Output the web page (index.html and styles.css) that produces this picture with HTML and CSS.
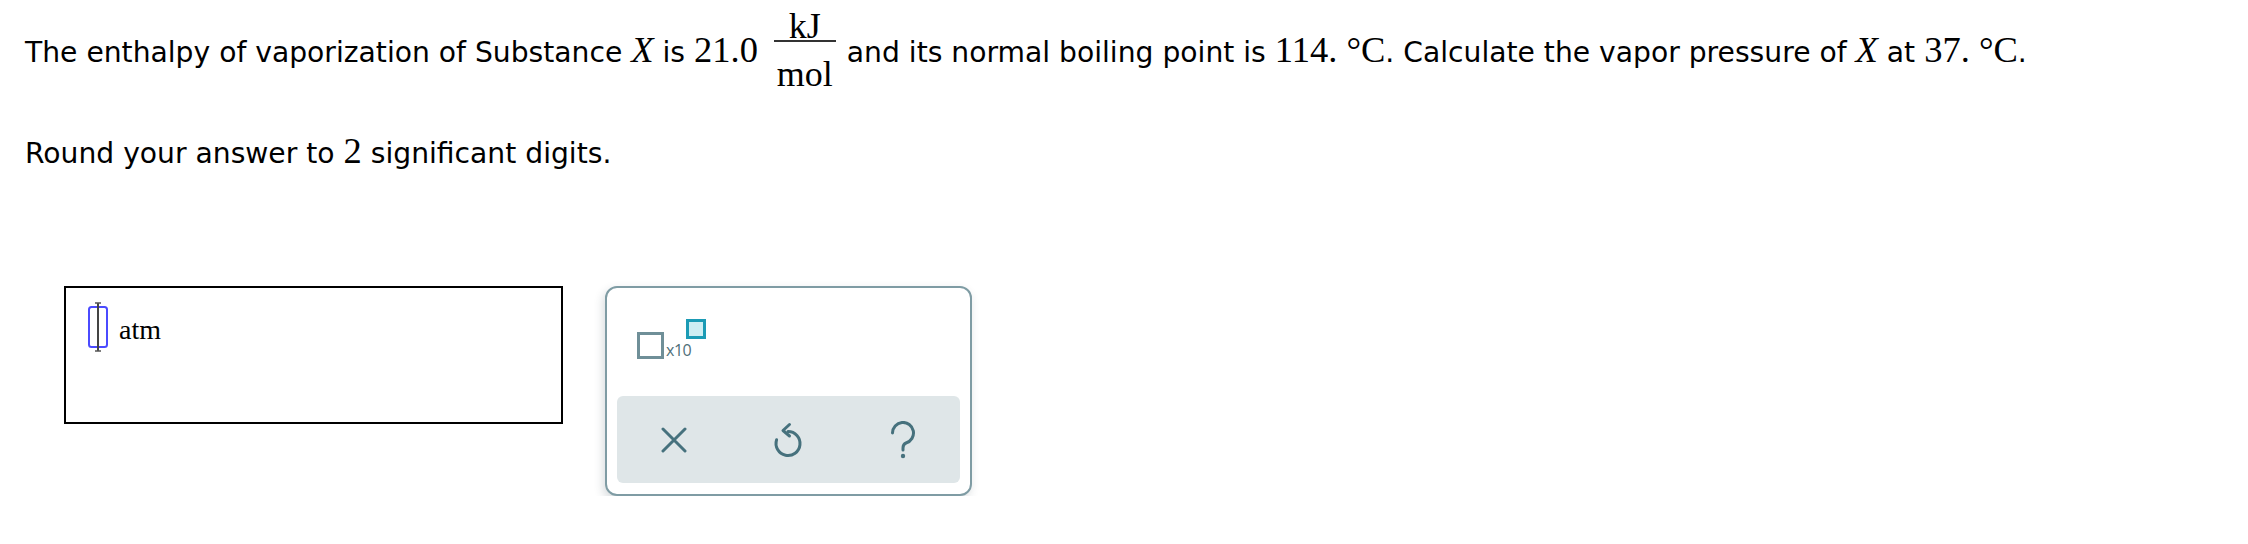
FILE: index.html
```html
<!DOCTYPE html>
<html>
<head>
<meta charset="utf-8">
<link rel="stylesheet" href="styles.css">
</head>
<body>
<div class="page">
  <p class="line1">The enthalpy of vaporization of Substance <i class="mvar">X</i> is <span class="m">21.0</span> <span class="frac"><span class="num">kJ</span><span class="bar"></span><span class="den">mol</span></span> and its normal boiling point is <span class="m">114. °C</span>. Calculate the vapor pressure of <i class="mvar">X</i> at <span class="m">37. °C</span>.</p>
  <p class="line2">Round your answer to <span class="m">2</span> significant digits.</p>
  <div class="answer-row">
    <div class="answer-box">
      <svg class="cursor" width="24" height="52" viewBox="0 0 24 52">
        <rect x="3" y="6" width="18" height="40" rx="2.5" fill="none" stroke="#4b4bff" stroke-width="2"/>
        <line x1="12" y1="2" x2="12" y2="50" stroke="#444" stroke-width="2"/>
        <line x1="9" y1="2" x2="15" y2="2" stroke="#555" stroke-width="1.5"/>
        <line x1="9" y1="50" x2="15" y2="50" stroke="#555" stroke-width="1.5"/>
      </svg>
      <span class="unit">atm</span>
    </div>
    <div class="panel">
      <div class="tools">
        <div class="sci">
          <span class="sq-big"></span><span class="x10">x10</span><span class="sq-small"></span>
        </div>
      </div>
      <div class="actions">
        <div class="act">
          <svg width="26" height="26" viewBox="0 0 26 26"><path d="M2 2 L24 24 M24 2 L2 24" stroke="#46717d" stroke-width="3" stroke-linecap="round" fill="none"/></svg>
        </div>
        <div class="act">
          <svg width="30" height="36" viewBox="0 0 30 36"><path d="M15 9.5 A12 12 0 1 1 3.6 17.8" stroke="#46717d" stroke-width="3" stroke-linecap="round" fill="none"/><path d="M16.5 2.5 L10 8.5 L16.5 14" stroke="#46717d" stroke-width="3" stroke-linecap="round" stroke-linejoin="round" fill="none"/></svg>
        </div>
        <div class="act">
          <svg width="26" height="38" viewBox="0 0 26 38"><path d="M2.5 12 A10.5 10.5 0 1 1 16 22 Q13 23.3 13 27 L13 29" stroke="#46717d" stroke-width="3" stroke-linecap="round" fill="none"/><circle cx="13" cy="35" r="2.2" fill="#46717d"/></svg>
        </div>
      </div>
    </div>
  </div>
</div>
</body>
</html>
```
FILE: styles.css
```css
html, body {
  margin: 0;
  padding: 0;
  background: #fff;
}
.page {
  padding: 8px 0 0 25px;
  font-family: "DejaVu Sans", Verdana, sans-serif;
  font-size: 28.2px;
  color: #000;
}
.line1 {
  margin: 0;
  line-height: 84px;
  white-space: nowrap;
}
.m {
  font-family: "Liberation Serif", "Times New Roman", serif;
  font-size: 36.5px;
}
.mvar {
  font-family: "Liberation Serif", "Times New Roman", serif;
  font-size: 36.5px;
  font-style: italic;
}
.frac {
  display: inline-flex;
  flex-direction: column;
  align-items: center;
  vertical-align: 24px;
  font-family: "Liberation Serif", "Times New Roman", serif;
  font-size: 36px;
  margin: 0 2px 0 7px;
}
.num {
  line-height: 28px;
  padding: 0 3px;
}
.den {
  line-height: 40px;
  padding: 0 3px;
  margin-top: 12px;
}
.bar {
  align-self: stretch;
  height: 2px;
  background: #333;
}
.line2 {
  margin: 36px 0 0;
  line-height: 40px;
}
.answer-row {
  display: flex;
  align-items: flex-start;
  margin-top: 112px;
  margin-left: 39px;
  gap: 42px;
}
.answer-box {
  box-sizing: border-box;
  width: 499px;
  height: 138px;
  border: 2px solid #000;
  display: flex;
  align-items: flex-start;
  padding: 13px 0 0 20px;
  gap: 9px;
}
.cursor {
  display: block;
  flex: none;
}
.unit {
  font-family: "Liberation Serif", "Times New Roman", serif;
  font-size: 28px;
  line-height: 30px;
  margin-top: 14px;
}
.panel {
  box-sizing: border-box;
  width: 367px;
  height: 210px;
  border: 2px solid #7f9ca4;
  border-radius: 12px;
  background: #fff;
  box-shadow: -2px 4px 10px rgba(40, 60, 70, 0.18);
  display: flex;
  flex-direction: column;
  padding: 0 10px 11px;
}
.tools {
  flex: 1;
  padding: 31px 0 0 20px;
}
.sci {
  position: relative;
  display: flex;
  align-items: flex-end;
  height: 40px;
}
.sq-big {
  box-sizing: border-box;
  width: 27px;
  height: 27px;
  border: 3px solid #6f8f98;
  display: block;
}
.x10 {
  font-family: "Open Sans", "DejaVu Sans", sans-serif;
  font-size: 16px;
  line-height: 16px;
  color: #4e6f79;
  margin-left: 2px;
  margin-bottom: 1px;
  letter-spacing: -0.5px;
}
.sq-small {
  box-sizing: border-box;
  width: 20px;
  height: 20px;
  border: 3px solid #1b9bb5;
  background: #cdeef3;
  align-self: flex-start;
  margin-left: -5px;
}
.actions {
  height: 87px;
  background: #dfe6e8;
  border-radius: 6px;
  display: grid;
  grid-template-columns: 1fr 1fr 1fr;
  align-items: center;
  justify-items: center;
}
.act svg {
  display: block;
}
```
